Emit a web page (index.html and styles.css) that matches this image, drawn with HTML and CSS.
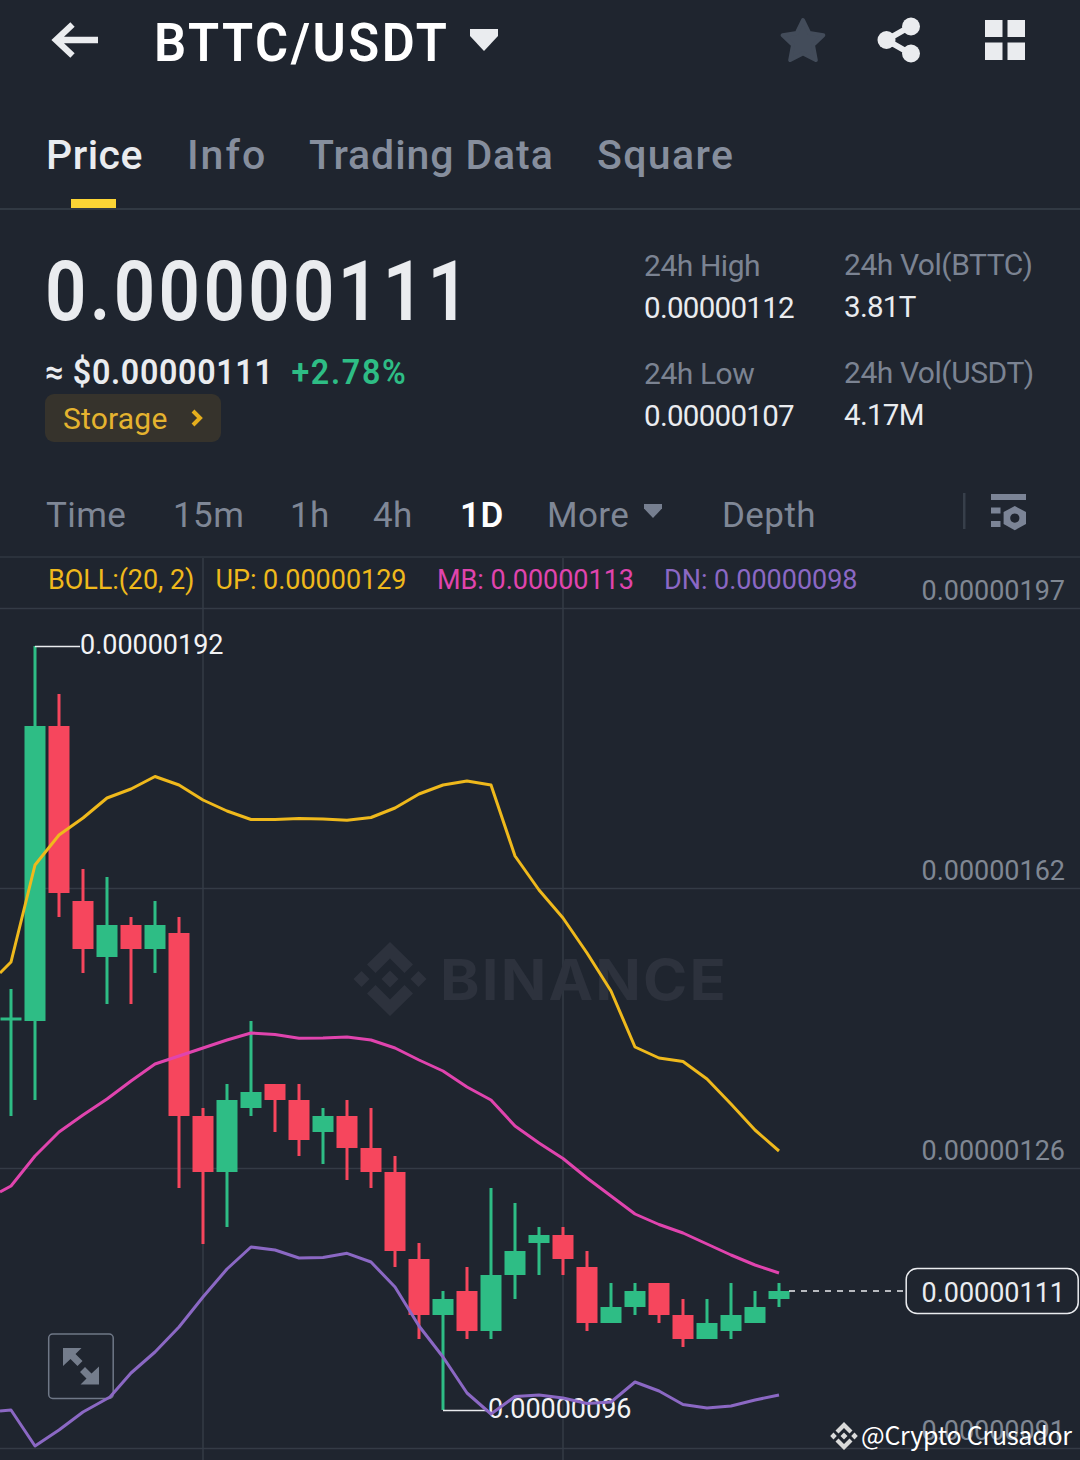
FILE: index.html
```html
<!DOCTYPE html>
<html lang="en">
<head>
<meta charset="utf-8">
<title>BTTC/USDT</title>
<link rel="stylesheet" href="styles.css">
</head>
<body>
<header class="topbar">
  <svg class="back" viewBox="0 0 48 38" width="48" height="38"><path d="M21.500 3.500 5 19l16.500 15.500M6 19h41" fill="none" stroke="#eaecef" stroke-width="6.300"/></svg>
  <h1 class="pair">BTTC/USDT</h1>
  <svg class="caret" viewBox="0 0 28 22" width="28" height="22"><path d="M0 0h28v7L14 22 0 7z" fill="#eaecef"/></svg>
  <div class="actions">
    <svg viewBox="0 0 46 46" width="46" height="46"><path d="M23 3l6.300 13 14 2.200L33 28l2.800 15L23 36.500 10.200 43 13 28 2.700 18.200l14-2.200z" fill="#434c5a" stroke="#434c5a" stroke-width="4" stroke-linejoin="round"/></svg>
    <svg viewBox="0 0 44 46" width="44" height="46"><path d="M34 9 9.500 23 34 37" fill="none" stroke="#eaecef" stroke-width="6"/><g fill="#eaecef"><circle cx="9.500" cy="23" r="9"/><circle cx="34" cy="9.500" r="9"/><circle cx="34" cy="36.500" r="9"/></g></svg>
    <svg viewBox="0 0 40 40" width="40" height="40"><path d="M0 0h17.500v17H0zM22.500 0H40v17H22.500zM0 22.500h17.500V40H0zM22.500 22.500H40V40H22.500z" fill="#eaecef"/></svg>
  </div>
</header>

<nav class="tabs">
  <span class="tab tab-active">Price</span>
  <span class="tab tab-info">Info</span>
  <span class="tab">Trading Data</span>
  <span class="tab tab-square">Square</span>
</nav>

<section class="summary">
  <div class="quote">
    <div class="last">0.00000111</div>
    <div class="fiat"><span class="approx">≈ $0.00000111</span><span class="change">+2.78%</span></div>
    <div class="chip"><span>Storage</span><svg viewBox="0 0 12 18" width="12" height="18"><path d="M2 2l7 7-7 7" fill="none" stroke="#e5ae1d" stroke-width="4"/></svg></div>
  </div>
  <dl class="stats">
    <dt>24h High</dt><dd>0.00000112</dd>
    <dt>24h Low</dt><dd>0.00000107</dd>
  </dl>
  <dl class="stats stats-volume">
    <dt>24h Vol(BTTC)</dt><dd>3.81T</dd>
    <dt>24h Vol(USDT)</dt><dd>4.17M</dd>
  </dl>
</section>

<div class="intervals">
  <span>Time</span>
  <span>15m</span>
  <span>1h</span>
  <span>4h</span>
  <span class="interval-active">1D</span>
  <span class="more">More<svg viewBox="0 0 18 14" width="18" height="14"><path d="M0 0h18v4.500L9 14 0 4.500z" fill="#767f90"/></svg></span>
  <span>Depth</span>
  <svg class="settings" viewBox="0 0 64 38" width="64" height="38">
    <path d="M0 0h2.500v36H0z" fill="#373f4a"/>
    <g fill="#7b8496"><path d="M28 1h35v6H28zM28 14.500h9.500v6H28zM28 28h9.500v6H28z"/><path fill-rule="evenodd" d="M51.800 13 63 19v12l-11.200 6.200L40.600 31V19zM51.800 20.500a4.600 4.600 0 1 0 .01 0z"/></g>
  </svg>
</div>

<svg class="chart" viewBox="0 558 1080 902" width="1080" height="902">
  <g class="grid">
    <path d="M0 608.500H1080M0 888.500H1080M0 1168.500H1080M0 1448.500H1080M203 558V1460M563 558V1460"/>
  </g>

  <g class="watermark">
    <path d="M390 942l23 22.500-8.500 8.500L390 958.500 375.500 973l-8.500-8.500zM361.500 971l8 8-8 8-8-8zM418.500 971l8 8-8 8-8-8zM390 970.500l8.500 8.500-8.500 8.500-8.500-8.500zM375.500 985l14.500 14.500 14.500-14.500 8.500 8.500-23 22.500-23-22.500z"/>
    <text x="440" y="999.500" textLength="288" lengthAdjust="spacingAndGlyphs">BINANCE</text>
  </g>

  <g class="wick up"><path d="M11 989V1116M35 646V1100M107 877V1004M155 901V973M227 1084V1227M251 1021V1116M323 1108V1164M443 1291V1410M491 1188V1339M515 1203V1299M539 1227V1275M611 1283V1323M635 1283V1315M707 1299V1339M731 1283V1339M755 1291V1323M779 1283V1307"/></g>
  <g class="wick down"><path d="M59 694V917M83 869V973M131 917V1004M179 917V1188M203 1108V1244M275 1084V1132M299 1084V1156M347 1100V1180M371 1108V1188M395 1156V1267M419 1243V1339M467 1267V1339M563 1227V1275M587 1251V1331M659 1283V1323M683 1299V1347"/></g>
  <g class="body up"><path d="M11 1017.500V1020.500M35 726V1021M107 925V957M155 925V949M227 1100V1172M251 1092V1108M323 1116V1132M443 1299V1315M491 1275V1331M515 1251V1275M539 1235V1243M611 1307V1323M635 1291V1307M707 1323V1339M731 1315V1331M755 1307V1323M779 1291V1299"/></g>
  <g class="body down"><path d="M59 726V893M83 901V949M131 925V949M179 933V1116M203 1116V1172M275 1084V1100M299 1100V1140M347 1116V1148M371 1148V1172M395 1172V1251M419 1259V1315M467 1291V1331M563 1235V1259M587 1267V1323M659 1283V1315M683 1315V1339"/></g>

  <g class="pointer">
    <path d="M35 646.500H80M443 1410.500H488"/>
    <path d="M789 1291H904" stroke-dasharray="6 6"/>
  </g>
  <g class="extreme">
    <text x="80" y="654" textLength="143.500">0.00000192</text>
    <text x="488" y="1417.500" textLength="143.500">0.00000096</text>
  </g>

  <g class="fullscreen">
    <rect x="48.700" y="1334" width="64.500" height="64.500" rx="4"/>
    <path d="M63 1348h18.500l-6 6 7 7-5 5-7-7-7.500 7zM99 1384.500H80.500l6-6-6.500-6.500 5-5 6.500 6.500 7.500-7z"/>
  </g>

  <g class="band">
    <polyline stroke="#efb91c" points="0,973 11,962 35,865 59,835 83,818 107,798 131,789 155,776.500 179,785 203,800 227,811 251,819.500 275,819.500 299,818.500 323,819 347,820.300 371,817.500 395,808 419,794 443,785 467,781 491,785 515,856 539,890 563,918 587,953 611,991 635,1047 659,1058 683,1061.500 707,1079 731,1104 755,1130 779,1151"/>
    <polyline stroke="#e044ae" points="0,1192 11,1186 35,1156 59,1132 83,1115 107,1099 131,1081 155,1064 179,1056 203,1048 227,1040 251,1033 275,1034.500 299,1038.300 323,1038 347,1037 371,1040 395,1048 419,1060 443,1071 467,1087 491,1100 515,1126 539,1143 563,1158.500 587,1178 611,1196 635,1214 659,1224.500 683,1233 707,1244 731,1255 755,1265 779,1273"/>
    <polyline stroke="#8b68c4" points="0,1411 11,1410 35,1446 59,1430 83,1412 110,1397 131,1373 155,1352 179,1327 203,1297 227,1269 251,1247 275,1250 299,1258 323,1257.500 347,1253.300 371,1262 395,1287 419,1326 443,1357 467,1393 491,1414 515,1396.500 539,1395 563,1398 587,1403.500 611,1402 635,1382 659,1391 683,1404.500 707,1408 731,1406 755,1400 779,1395"/>
  </g>

  <g class="legend">
    <text fill="#efb91c" x="48" y="588.500" textLength="146.500">BOLL:(20, 2)</text>
    <text fill="#efb91c" x="215.500" y="588.500" textLength="191">UP: 0.00000129</text>
    <text fill="#e044ae" x="437" y="588.500" textLength="197">MB: 0.00000113</text>
    <text fill="#8b68c4" x="664" y="588.500" textLength="193.500">DN: 0.00000098</text>
  </g>

  <g class="axis">
    <text x="921.500" y="600" textLength="143.500">0.00000197</text>
    <text x="921.500" y="880" textLength="143.500">0.00000162</text>
    <text x="921.500" y="1160" textLength="143.500">0.00000126</text>
    <text x="921.500" y="1440" textLength="143.500">0.00000091</text>
  </g>

  <g class="current">
    <rect x="906.200" y="1268.500" width="172" height="45" rx="11"/>
    <text x="921.500" y="1302" textLength="143.500">0.00000111</text>
  </g>

  <g class="author">
    <path d="M844 1422l8.500 8.500-3 3-5.500-5.500-5.500 5.500-3-3zM833.500 1432.500l3.300 3.500-3.300 3.500-3.300-3.500zM854.500 1432.500l3.300 3.500-3.300 3.500-3.300-3.500zM844 1432.500l3.500 3.500-3.500 3.500-3.500-3.500zM838.500 1438.500l5.500 5.500 5.500-5.500 3 3-8.500 8.500-8.500-8.500z"/>
    <text x="861" y="1445" textLength="211">@Crypto Crusador</text>
  </g>
</svg>
</body>
</html>
```
FILE: styles.css
```css
* { box-sizing: border-box; }

body {
  margin: 0;
  width: 1080px;
  height: 1460px;
  overflow: hidden;
  background: #1f252f;
  color: #eaecef;
  font-family: Roboto, "Liberation Sans", sans-serif;
}

svg { display: block; flex: none; }

.topbar {
  display: flex;
  align-items: center;
  height: 80px;
  padding: 0 55px 0 51px;
}

.pair {
  width: 314px;
  margin: 0 0 0 55px;
  padding-top: 4px;
  color: #fff;
  font-size: 54.5px;
  font-weight: 600;
  line-height: 64px;
  letter-spacing: 2.7px;
  white-space: nowrap;
  transform: scaleX(.93);
  transform-origin: left;
}

.caret { margin-left: 2px; }

.actions {
  display: flex;
  align-items: center;
  margin-left: auto;
}

.actions svg + svg { margin-left: 51px; }
.actions svg + svg + svg { margin-left: 64px; }

.tabs {
  display: grid;
  grid-template-columns: 141px 122px 288px auto;
  height: 130px;
  padding: 53px 0 0 46px;
  border-bottom: 2px solid #313943;
}

.tab {
  color: #868e9d;
  font-size: 41px;
  font-weight: 500;
  line-height: 44px;
  letter-spacing: .9px;
}

.tab-active {
  color: #eaecef;
  letter-spacing: .5px;
}

.tab-info { letter-spacing: 2px; }
.tab-square { letter-spacing: 1.4px; }

.tab-active::after {
  content: "";
  display: block;
  width: 45px;
  height: 9px;
  margin: 22px 0 0 25px;
  background: #fcd535;
}

.summary {
  display: flex;
  height: 262px;
  padding: 36px 0 0 45px;
}

.quote { width: 599px; }

.last {
  font-size: 83px;
  font-weight: 600;
  line-height: 91px;
  letter-spacing: 3.8px;
  transform: scaleX(.875);
  transform-origin: left;
}

.fiat {
  display: flex;
  margin: 14px 0 1px;
  font-size: 34.7px;
  font-weight: 600;
  line-height: 42px;
  transform: scaleX(.93);
  transform-origin: left;
}

.approx {
  width: 265px;
  letter-spacing: .7px;
}

.change {
  color: #2ebd85;
  letter-spacing: 1.8px;
}

.chip {
  display: flex;
  align-items: center;
  justify-content: space-between;
  width: 176px;
  height: 48px;
  padding: 2px 18px;
  border-radius: 9px;
  background: #36332c;
  color: #e5b32f;
  font-size: 30px;
  letter-spacing: .2px;
}

.stats {
  width: 200px;
  margin: 0;
  font-size: 30px;
  white-space: nowrap;
}

.stats dt {
  color: #7b8392;
  line-height: 40px;
  letter-spacing: -.45px;
}

.stats dd {
  margin: 0 0 24px;
  font-size: 29.5px;
  line-height: 44px;
  letter-spacing: -.7px;
}

.stats-volume { margin-top: -1px; }

.intervals {
  display: grid;
  grid-template-columns: 127px 117px 83px 87px 87px 175px 241px auto;
  align-items: center;
  height: 86px;
  padding: 3px 0 0 46px;
  border-bottom: 2px solid #2b323c;
  color: #7f8796;
  font-size: 35px;
  letter-spacing: .4px;
}

.interval-active {
  color: #fff;
  font-weight: 600;
}

.more {
  display: flex;
  align-items: center;
  gap: 15px;
}

.more svg { margin-top: -9px; }

.settings { margin-top: -7px; }

.chart text { font-size: 27px; }

.grid path {
  fill: none;
  stroke: #343b46;
  stroke-width: 1.5;
}

.watermark { fill: #2d323d; }

.chart .watermark text {
  font-family: Inter, sans-serif;
  font-size: 56px;
  font-weight: 700;
  letter-spacing: 2px;
}

.up { stroke: #2ebd85; }
.down { stroke: #f6465d; }
.wick { stroke-width: 3; }
.body { stroke-width: 21; }

.pointer {
  fill: none;
  stroke: #eaecef;
  stroke-width: 1.6;
}

.extreme { fill: #f2f3f5; }

.fullscreen rect {
  fill: none;
  stroke: #6f7887;
  stroke-width: 1.5;
}

.fullscreen path { fill: #747d8c; }

.band polyline {
  fill: none;
  stroke-width: 3;
  stroke-linejoin: round;
}

.axis { fill: #7f8793; }

.current rect {
  fill: #1f252f;
  stroke: #eaecef;
  stroke-width: 1.5;
}

.current text { fill: #eaecef; }

.author path { fill: #dadada; }

.chart .author text {
  fill: #fff;
  font-family: "Noto Sans CJK SC", sans-serif;
  font-size: 25px;
}
```
